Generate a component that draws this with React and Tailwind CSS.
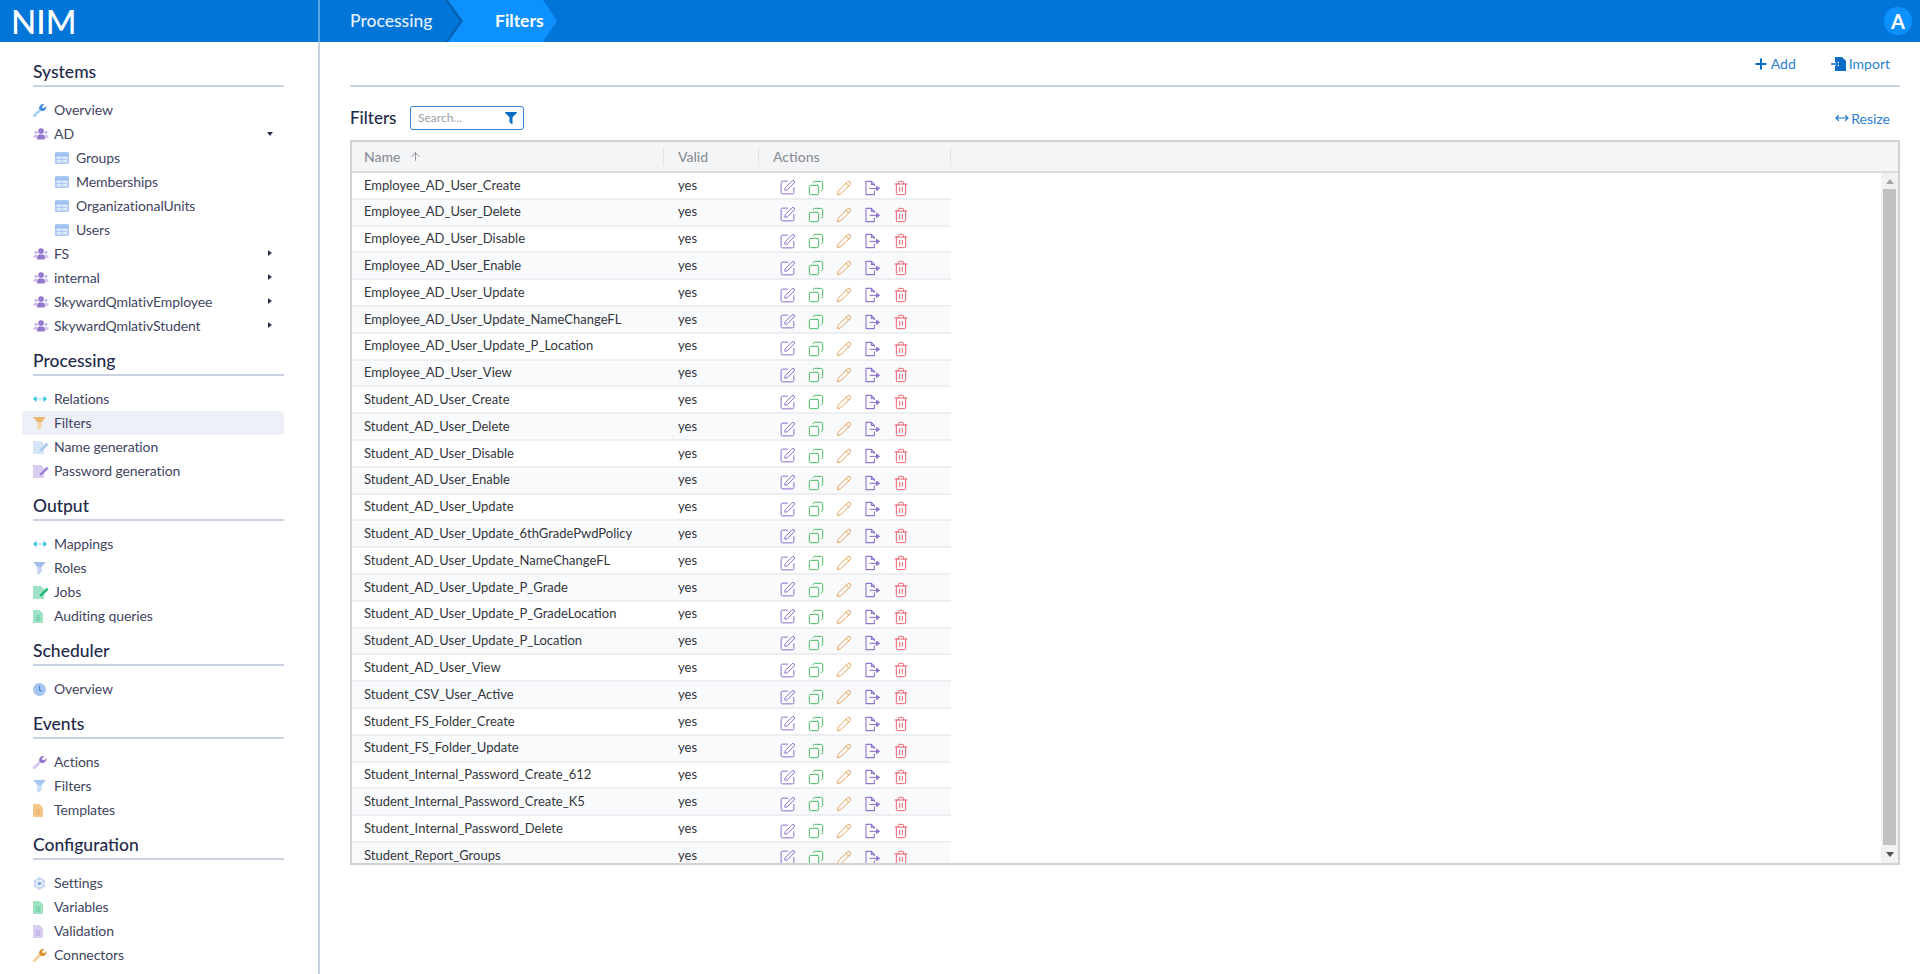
import { Plus, ArrowUp, MoveHorizontal, SquarePen, Copy, Pencil, Trash2 } from 'lucide-react';
import { FaFilter } from 'react-icons/fa';

const WrenchIcon = ({ light, dark }) => (
    <svg width="14" height="14" viewBox="0 0 16 16" className="shrink-0">
        <path d="M1.5 14.5 L8 8" stroke={light} strokeWidth="3.2" strokeLinecap="round" fill="none" />
        <path d="M7 6.5 C6.6 3 9.6 .4 13 1.2 L10.4 3.8 L10.8 5.6 L12.6 6 L15.2 3.4 C15.8 6.8 13 9.8 9.6 9.2 Z" fill={dark} />
    </svg>
);

const UsersIcon = ({ light, dark }) => (
    <svg width="16" height="14" viewBox="0 0 18 16" className="shrink-0">
        <circle cx="3.4" cy="6.2" r="2" fill={light} />
        <circle cx="14.6" cy="6.2" r="2" fill={light} />
        <path d="M.4 12.4 C.4 9.6 2 8.8 4.4 8.8 V12.4 Z M17.6 12.4 C17.6 9.6 16 8.8 13.6 8.8 V12.4 Z" fill={light} />
        <circle cx="9" cy="4.6" r="3.2" fill={dark} />
        <path d="M4.6 14.4 V11.6 C4.6 9.4 6 8.6 7.4 8.6 H10.6 C12 8.6 13.4 9.4 13.4 11.6 V14.4 Z" fill={dark} />
    </svg>
);

const TableIcon = () => (
    <svg width="14" height="12" viewBox="0 0 14 12" className="shrink-0">
        <rect width="14" height="12" rx="1.5" fill="#a9c8f2" />
        <path d="M0 3.4 H14 V2.6 H0 Z" fill="#7fa9e6" />
        <path d="M1.5 4.4 H6.4 V6.9 H1.5 Z M7.6 4.4 H12.5 V6.9 H7.6 Z M1.5 8 H6.4 V10.5 H1.5 Z M7.6 8 H12.5 V10.5 H7.6 Z" fill="#dbe8fa" />
    </svg>
);

const ArrowsIcon = () => (
    <svg width="14" height="8" viewBox="0 0 14 8" className="shrink-0">
        <path d="M3 4 H11" stroke="#a5e6f4" strokeWidth="1.2" />
        <path d="M0 4 L3.4 1 V7 Z M14 4 L10.6 1 V7 Z" fill="#27c0e4" />
    </svg>
);

const FunnelIcon = ({ light, dark }) => (
    <svg width="13" height="14" viewBox="0 0 14 14" className="shrink-0">
        <path d="M.2 .6 H13.8 L9.4 6 H4.6 Z" fill={dark} />
        <path d="M4.6 6 H9.4 V11 L6.4 13.6 H4.6 Z" fill={light} />
    </svg>
);

const FileEditIcon = ({ light, dark }) => (
    <svg width="16" height="13" viewBox="0 0 16 13" className="shrink-0">
        <path d="M0 0 H8 L11 3 V13 H0 Z" fill={light} />
        <path d="M7 8.4 L13.6 1.8 L15.6 3.4 L9 10 L6.6 10.6 Z" fill={dark} />
    </svg>
);

const FileIcon = ({ light, dark }) => (
    <svg width="10" height="13" viewBox="0 0 10 13" className="shrink-0 mr-[4px]">
        <path d="M0 0 H6.6 L10 3.4 V13 H0 Z" fill={light} />
        <path d="M2.6 6 H7.4 M2.6 8 H7.4 M2.6 10 H7.4" stroke={dark} strokeWidth=".9" />
    </svg>
);

const ClockIcon = () => (
    <svg width="13" height="13" viewBox="0 0 13 13" className="shrink-0">
        <circle cx="6.5" cy="6.5" r="6.5" fill="#a5c4ee" />
        <path d="M6.5 3 V7 L9 8.2" stroke="#4a86d8" strokeWidth="1.2" fill="none" />
    </svg>
);

const CogIcon = () => (
    <svg width="13" height="13" viewBox="0 0 13 13" className="shrink-0">
        <circle cx="6.5" cy="6.5" r="4.6" fill="none" stroke="#c4d6ef" strokeWidth="1.8" />
        <path d="M6.5 0 V13 M.9 3.2 L12.1 9.8 M.9 9.8 L12.1 3.2" stroke="#c4d6ef" strokeWidth="1.8" />
        <circle cx="6.5" cy="6.5" r="3.4" fill="#e6eef9" />
        <circle cx="6.5" cy="6.5" r="1.8" fill="#7ea6de" />
    </svg>
);

const FileExport = () => (
    <svg width="17" height="16" viewBox="0 0 17 16" fill="none" stroke="#9075cc" strokeWidth="1.1" strokeLinejoin="round">
        <path d="M10.4 6 V4.4 L7.4 1.4 H2 V14.6 H10.4 V10.6" />
        <path d="M7.4 1.4 V4.4 H10.4" />
        <path d="M5.6 8.4 H12.5" />
        <path d="M12.6 6.4 L15.4 8.4 L12.6 10.4 Z" fill="#9075cc" />
    </svg>
);

const Caret = ({ open }) => (
    <svg width="6" height="6" viewBox="0 0 6 6" className={`ml-auto mr-[11px] ${open ? 'mb-0' : 'mb-[2px]'}`}>
        <path d={open ? 'M0 1 H6 L3 5 Z' : 'M1 0 L5 3 L1 6 Z'} fill="#2a3350" />
    </svg>
);

const NavItem = ({ icon, label, active, caret, sub }) => (
    <div className={`h-6 flex items-center rounded text-[14px] text-[#3f4560] tracking-[-0.1px] ${active ? 'bg-[#edf0f6]' : ''} ${sub ? 'pl-[33px]' : 'pl-[11px]'}`}>
        <span className="w-[21px] flex items-center">{icon}</span>
        <span className="whitespace-nowrap pb-px">{label}</span>
        {caret && <Caret open={caret === 'open'} />}
    </div>
);

const NavSection = ({ title, children }) => (
    <div className="mt-[11px]">
        <div className="ml-[11px] h-[27px] border-b-2 border-[#c9d2e3] text-[17.5px] leading-[23px] text-[#23294a] font-medium">{title}</div>
        <div className="mt-[11px]">{children}</div>
    </div>
);

const users = <UsersIcon light="#cdbdea" dark="#9377cf" />;
const table = <TableIcon />;

const Sidebar = () => (
    <aside className="w-[320px] shrink-0 border-r-2 border-[#c9d2e3] pl-[22px] pr-[34px] pt-[7px] h-[932px] overflow-hidden">
        <NavSection title="Systems">
            <NavItem icon={<WrenchIcon light="#a9d0f5" dark="#3f8fe0" />} label="Overview" />
            <NavItem icon={users} label="AD" caret="open" />
            <NavItem icon={table} label="Groups" sub />
            <NavItem icon={table} label="Memberships" sub />
            <NavItem icon={table} label="OrganizationalUnits" sub />
            <NavItem icon={table} label="Users" sub />
            <NavItem icon={users} label="FS" caret="closed" />
            <NavItem icon={users} label="internal" caret="closed" />
            <NavItem icon={users} label="SkywardQmlativEmployee" caret="closed" />
            <NavItem icon={users} label="SkywardQmlativStudent" caret="closed" />
        </NavSection>
        <NavSection title="Processing">
            <NavItem icon={<ArrowsIcon />} label="Relations" />
            <NavItem icon={<FunnelIcon light="#f3d6a8" dark="#eab56c" />} label="Filters" active />
            <NavItem icon={<FileEditIcon light="#d6e4f8" dark="#a9c8f0" />} label="Name generation" />
            <NavItem icon={<FileEditIcon light="#d9cdf0" dark="#9d83d6" />} label="Password generation" />
        </NavSection>
        <NavSection title="Output">
            <NavItem icon={<ArrowsIcon />} label="Mappings" />
            <NavItem icon={<FunnelIcon light="#c2d3f0" dark="#a3bde8" />} label="Roles" />
            <NavItem icon={<FileEditIcon light="#9fe3c4" dark="#1fb57a" />} label="Jobs" />
            <NavItem icon={<FileIcon light="#9fe3c4" dark="#5cc79a" />} label="Auditing queries" />
        </NavSection>
        <NavSection title="Scheduler">
            <NavItem icon={<ClockIcon />} label="Overview" />
        </NavSection>
        <NavSection title="Events">
            <NavItem icon={<WrenchIcon light="#d3c6ec" dark="#9276cc" />} label="Actions" />
            <NavItem icon={<FunnelIcon light="#c2dcf5" dark="#a3c8f0" />} label="Filters" />
            <NavItem icon={<FileIcon light="#f5c88e" dark="#e8a85a" />} label="Templates" />
        </NavSection>
        <NavSection title="Configuration">
            <NavItem icon={<CogIcon />} label="Settings" />
            <NavItem icon={<FileIcon light="#9fe3c4" dark="#5cc79a" />} label="Variables" />
            <NavItem icon={<FileIcon light="#d9cdf0" dark="#b7a3e0" />} label="Validation" />
            <NavItem icon={<WrenchIcon light="#f3cf9e" dark="#dd8a1f" />} label="Connectors" />
        </NavSection>
    </aside>
);

const filters = [
    'Employee_AD_User_Create', 'Employee_AD_User_Delete', 'Employee_AD_User_Disable', 'Employee_AD_User_Enable',
    'Employee_AD_User_Update', 'Employee_AD_User_Update_NameChangeFL', 'Employee_AD_User_Update_P_Location', 'Employee_AD_User_View',
    'Student_AD_User_Create', 'Student_AD_User_Delete', 'Student_AD_User_Disable', 'Student_AD_User_Enable',
    'Student_AD_User_Update', 'Student_AD_User_Update_6thGradePwdPolicy', 'Student_AD_User_Update_NameChangeFL', 'Student_AD_User_Update_P_Grade',
    'Student_AD_User_Update_P_GradeLocation', 'Student_AD_User_Update_P_Location', 'Student_AD_User_View', 'Student_CSV_User_Active',
    'Student_FS_Folder_Create', 'Student_FS_Folder_Update', 'Student_Internal_Password_Create_612', 'Student_Internal_Password_Create_K5',
    'Student_Internal_Password_Delete', 'Student_Report_Groups',
];

const Row = ({ name, odd }) => (
    <div className={`h-[26.8px] w-[599px] shrink-0 flex items-center border-b-2 border-[#eceef2] text-[13px] text-[#33363c] ${odd ? 'bg-[#f9fafc]' : 'bg-white'}`}>
        <div className="w-[312px] pl-[12px] whitespace-nowrap">{name}</div>
        <div className="w-[95px] pl-[14px]">yes</div>
        <div className="flex items-center pl-[20px] pt-[5px] gap-[12px]">
            <SquarePen size={17} strokeWidth={1.4} className="text-[#8a6cc8]" />
            <Copy size={16} strokeWidth={1.5} className="text-[#48bb60] -scale-x-100" />
            <Pencil size={16} strokeWidth={1.4} className="text-[#e29a48]" />
            <FileExport />
            <Trash2 size={16} strokeWidth={1.4} className="text-[#ec5562]" />
        </div>
    </div>
);

const HeaderBar = () => (
    <header className="h-[42px] bg-[#0275d8] flex items-center text-white overflow-hidden">
        <div className="w-[320px] h-full border-r-2 border-[#5aa7e6] pl-[11px] text-[33px] leading-[42px] font-medium">NIM</div>
        <div className="pl-[30px] w-[128px] text-[17.5px] font-medium text-[#e3f1fd]">Processing</div>
        <div className="relative h-full w-[112px]">
            <div className="absolute inset-y-0 left-[-3px] w-[113px] bg-[#0562b4] [clip-path:polygon(0_0,98px_0,112px_50%,98px_100%,0_100%,15px_50%)]"></div>
            <div className="absolute inset-y-0 left-0 w-[110px] bg-[#0d91ff] [clip-path:polygon(0_0,95px_0,109px_50%,95px_100%,0_100%,15px_50%)] flex items-center pl-[47px] text-[17.5px] font-bold">Filters</div>
        </div>
        <div className="ml-auto mr-[8px] w-7 h-7 rounded-full bg-[#0d91ff] flex items-center justify-center text-[20px] font-bold">A</div>
    </header>
);

const App = () => (
    <div className="h-[974px] overflow-hidden bg-white font-['Lato',sans-serif]">
        <HeaderBar />
        <div className="flex">
            <Sidebar />
            <main className="flex-1 pl-[30px] pr-[20px]">
                <div className="h-[45px] border-b-2 border-[#c9d2e3] flex items-center justify-end gap-[35px] pr-[10px] text-[14px] text-[#2e7fd0]">
                    <span className="flex items-center gap-[2px]"><Plus size={16} strokeWidth={3} className="text-[#0b6cc4]" />Add</span>
                    <span className="flex items-center gap-[3px]">
                        <svg width="15" height="14" viewBox="0 0 15 14">
                            <path d="M4 0 H11 L15 4 V14 H4 V9 H8 V5 H4 Z" fill="#0b6cc4" />
                            <path d="M0 7 H7 M5 5 L7.4 7 L5 9" stroke="#0b6cc4" strokeWidth="1.4" fill="none" />
                        </svg>
                        Import
                    </span>
                </div>
                <div className="h-[53px] pt-[9px] flex items-center">
                    <h2 className="text-[17px] font-medium text-[#23294a] w-[60px]">Filters</h2>
                    <div className="w-[114px] h-[24px] border border-[#2e7fd0] rounded-[3px] flex items-center pl-[7px] pr-[6px] text-[12px] text-[#9aa0a8]">
                        Search...
                        <FaFilter size={12} className="ml-auto text-[#0b6cc4]" />
                    </div>
                    <span className="ml-auto mr-[10px] flex items-center gap-[2px] text-[14px] text-[#2e7fd0]">
                        <MoveHorizontal size={14} strokeWidth={2} className="text-[#0b6cc4]" />Resize
                    </span>
                </div>
                <div className="h-[725px] border-2 border-[#d2d2d2] flex flex-col">
                    <div className="h-[31px] shrink-0 bg-[#f4f5f7] border-b-2 border-[#dcdcdc] flex items-center text-[14px] text-[#8c9096] font-medium">
                        <div className="w-[312px] pl-[12px] flex items-center gap-[8px] border-r border-[#e2e4e8] h-[19px]">Name <ArrowUp size={13} strokeWidth={1.5} className="text-[#7c8086]" /></div>
                        <div className="w-[95px] pl-[14px] border-r border-[#e2e4e8] h-[19px] flex items-center">Valid</div>
                        <div className="w-[192px] pl-[14px] border-r border-[#e2e4e8] h-[19px] flex items-center">Actions</div>
                    </div>
                    <div className="flex-1 flex overflow-hidden">
                        <div className="flex-1 flex flex-col overflow-hidden">
                            {filters.map((name, i) => <Row key={name} name={name} odd={i % 2 === 1} />)}
                        </div>
                        <div className="w-[17px] shrink-0 bg-[#f1f1f1] flex flex-col items-center">
                            <div className="h-[16px] flex items-center">
                                <svg width="8" height="5" viewBox="0 0 8 5"><path d="M4 0 L8 5 H0 Z" fill="#a3a3a3" /></svg>
                            </div>
                            <div className="w-[13px] flex-1 bg-[#c1c1c1]"></div>
                            <div className="h-[18px] flex items-center">
                                <svg width="8" height="5" viewBox="0 0 8 5"><path d="M0 0 H8 L4 5 Z" fill="#505050" /></svg>
                            </div>
                        </div>
                    </div>
                </div>
            </main>
        </div>
    </div>
);

export default App;
